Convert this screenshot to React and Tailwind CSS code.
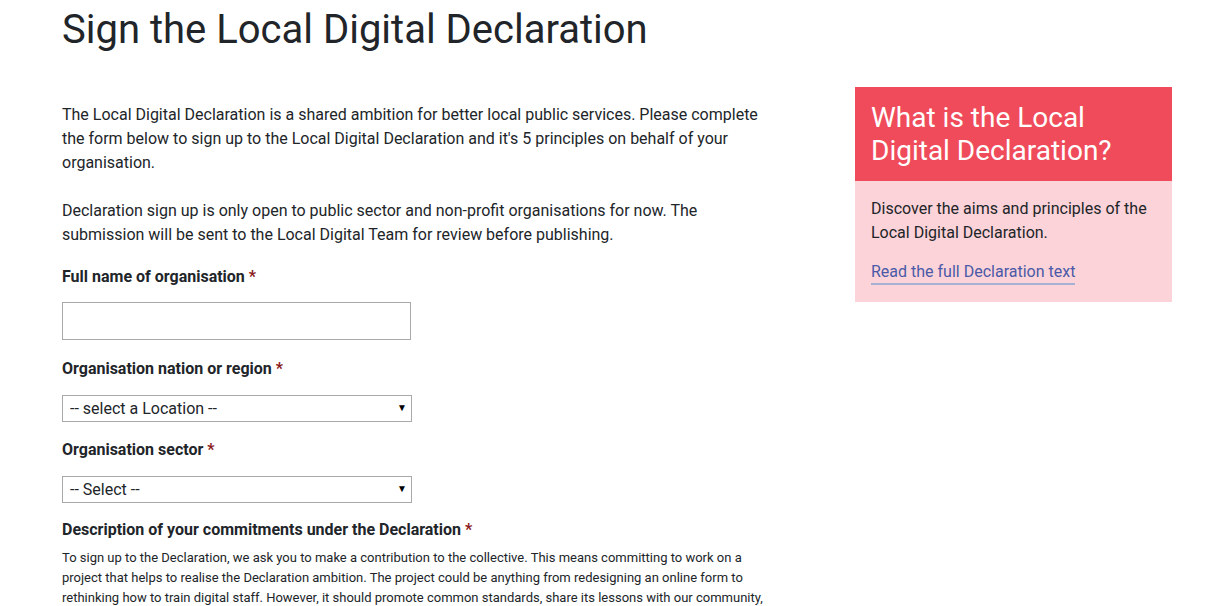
import React from "react";

function Label({ children }) {
  return (
    <label className="block text-base font-bold leading-6 text-[#212529]">
      {children} <span className="text-[#8b1a1a]">*</span>
    </label>
  );
}

function SelectBox({ placeholder }) {
  return (
    <div className="relative w-[350px]">
      <select className="block h-[27px] w-full appearance-none rounded-none border border-[#a9a9a9] bg-white pl-[7px] text-[16px] text-[#212529]">
        <option>{placeholder}</option>
      </select>
      <span className="pointer-events-none absolute right-[5px] top-[5px] text-[10px] text-black">▼</span>
    </div>
  );
}

export default function App() {
  return (
    <div className="min-h-screen bg-white font-['Roboto',sans-serif] text-[#212529]">
      <div className="ml-[62px] w-[1110px]">
        <h1 className="pt-[6px] text-[40px] font-normal leading-[48px]">Sign the Local Digital Declaration</h1>

        <div className="mt-[48px] flex items-start justify-between">
          <div className="w-[710px] pt-[1px]">
            <p className="text-base leading-6">
              The Local Digital Declaration is a shared ambition for better local public services. Please complete
              the form below to sign up to the Local Digital Declaration and it's 5 principles on behalf of your
              organisation.
            </p>
            <p className="mt-6 text-base leading-6">
              Declaration sign up is only open to public sector and non-profit organisations for now. The
              submission will be sent to the Local Digital Team for review before publishing.
            </p>

            <div className="mt-[18px]">
              <Label>Full name of organisation</Label>
              <input
                type="text"
                className="mt-[13px] block h-[38px] w-[349px] border border-[#a9a9a9] bg-white px-2"
              />
            </div>

            <div className="mt-[17px]">
              <Label>Organisation nation or region</Label>
              <div className="mt-[14px]">
                <SelectBox placeholder="-- select a Location --" />
              </div>
            </div>

            <div className="mt-[16px]">
              <Label>Organisation sector</Label>
              <div className="mt-[14px]">
                <SelectBox placeholder="-- Select --" />
              </div>
            </div>

            <div className="mt-[15px]">
              <Label>Description of your commitments under the Declaration</Label>
              <p className="mt-[6px] whitespace-nowrap text-[13px] leading-5">
                To sign up to the Declaration, we ask you to make a contribution to the collective. This means committing to work on a
                <br />
                project that helps to realise the Declaration ambition. The project could be anything from redesigning an online form to
                <br />
                rethinking how to train digital staff. However, it should promote common standards, share its lessons with our community,
                <br />
                and involve collaboration with other organisations.
              </p>
            </div>
          </div>

          <aside className="mt-[-15px] w-[317px]">
            <div className="bg-[#f04b5a] px-4 pb-[14px] pt-[14px]">
              <h2 className="text-[28px] font-normal leading-[33px] text-white">What is the Local Digital Declaration?</h2>
            </div>
            <div className="bg-[#fcd3d8] px-4 pb-[17px] pt-[16px]">
              <p className="text-base leading-6">Discover the aims and principles of the Local Digital Declaration.</p>
              <a href="#" className="mt-4 inline-block border-b-2 border-[#a6b1d6] leading-[22px] text-[#4a5aa8]">
                Read the full Declaration text
              </a>
            </div>
          </aside>
        </div>
      </div>
    </div>
  );
}
